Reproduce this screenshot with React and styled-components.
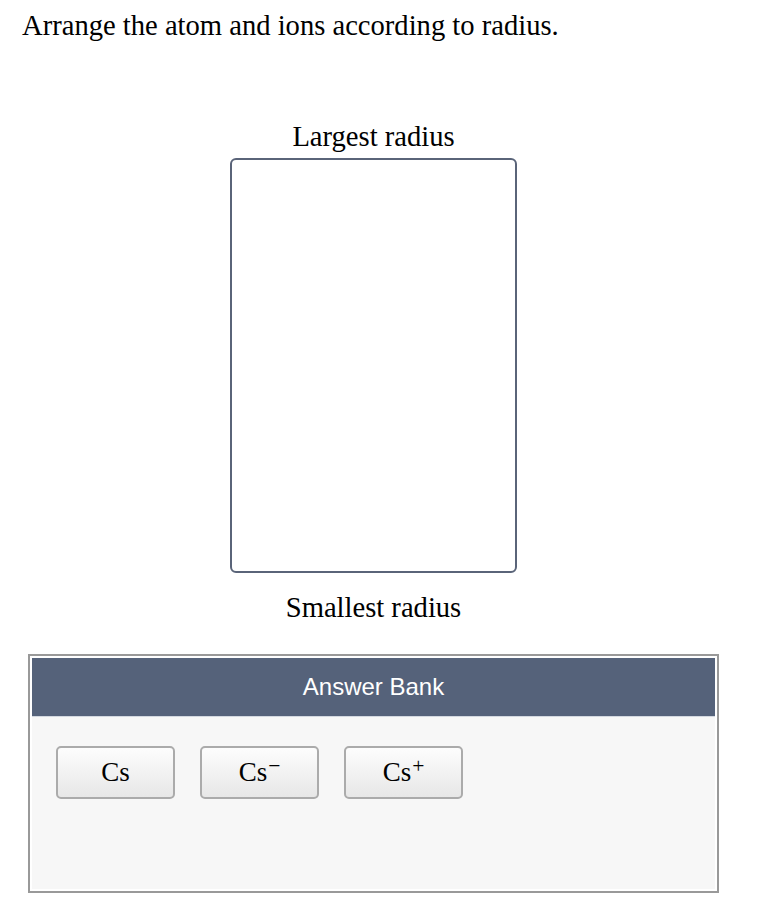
import React from "react";
import styled, { createGlobalStyle } from "styled-components";

const ions = [
  { id: "cs", symbol: "Cs", charge: null },
  { id: "cs-minus", symbol: "Cs", charge: "−" },
  { id: "cs-plus", symbol: "Cs", charge: "+" },
];

function App() {
  return (
    <>
      <GlobalStyle />
      <Page>
        <Prompt>Arrange the atom and ions according to radius.</Prompt>

        <Workspace>
          <Ranking>
            <RankLabel>Largest radius</RankLabel>
            <DropZone />
            <RankLabel $bottom>Smallest radius</RankLabel>
          </Ranking>

          <Bank>
            <BankHeader>Answer Bank</BankHeader>
            <BankBody>
              {ions.map((ion) => (
                <Tile key={ion.id}>
                  {ion.symbol}
                  {ion.charge && <Charge>{ion.charge}</Charge>}
                </Tile>
              ))}
            </BankBody>
          </Bank>
        </Workspace>
      </Page>
    </>
  );
}

export default App;

/* ---------------- styles ---------------- */

const GlobalStyle = createGlobalStyle`
  html, body {
    margin: 0;
    padding: 0;
    background: #fff;
  }
  body {
    font-family: "Liberation Serif", "Times New Roman", serif;
    color: #000;
  }
`;

const Page = styled.main`
  width: 784px;
  min-height: 920px;
  padding-top: 9px;
  box-sizing: border-box;
`;

const Prompt = styled.h1`
  margin: 0 0 0 22px;
  font-weight: 400;
  font-size: 28.6px;
  line-height: 33px;
`;

const Workspace = styled.div`
  width: 691px;
  margin: 78px 0 0 28px;
  display: flex;
  flex-direction: column;
  align-items: center;
`;

const Ranking = styled.div`
  display: flex;
  flex-direction: column;
  align-items: center;
`;

const RankLabel = styled.div`
  font-size: 28.6px;
  line-height: 33px;
  margin: ${(p) => (p.$bottom ? "18px 0 0" : "0 0 5px")};
`;

const DropZone = styled.div`
  width: 287px;
  height: 415px;
  box-sizing: border-box;
  border: 2px solid #5a6479;
  border-radius: 6px;
  background: #fff;
`;

const Bank = styled.section`
  align-self: stretch;
  margin-top: 30px;
  height: 239px;
  box-sizing: border-box;
  border: 2px solid #999;
  padding: 2px;
  background: #fff;
  display: flex;
  flex-direction: column;
`;

const BankHeader = styled.div`
  height: 58px;
  display: flex;
  align-items: center;
  justify-content: center;
  background: #55627a;
  border-bottom: 1px solid #d3d8e0;
  color: #fff;
  font-family: "Liberation Sans", Arial, sans-serif;
  font-size: 24px;
`;

const BankBody = styled.div`
  flex: 1;
  background: #f7f7f7;
  display: flex;
  align-items: flex-start;
  gap: 25px;
  padding: 29px 24px 0;
`;

const Tile = styled.button`
  width: 119px;
  height: 53px;
  box-sizing: border-box;
  border: 2px solid #ababab;
  border-radius: 5px;
  background: linear-gradient(to bottom, #fdfdfd, #e7e7e7);
  font-family: "Liberation Serif", "Times New Roman", serif;
  font-size: 27px;
  color: #000;
  padding: 0;
  display: flex;
  align-items: center;
  justify-content: center;
`;

const Charge = styled.sup`
  font-size: 0.8em;
  line-height: 0;
  position: relative;
  top: -0.3em;
  margin-left: 1px;
`;
